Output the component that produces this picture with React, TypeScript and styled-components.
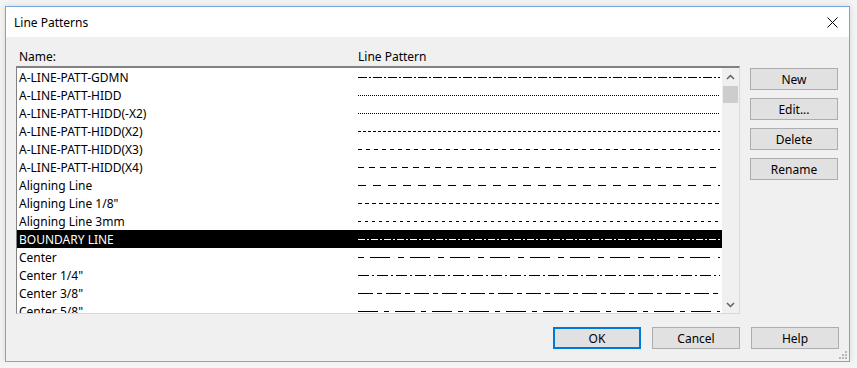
import { ReactElement } from 'react';
import styled, { createGlobalStyle } from 'styled-components';

type Row = { name: string; dash: string };

const rows: Row[] = [
    { name: 'A-LINE-PATT-GDMN', dash: '9 2 2 2' },
    { name: 'A-LINE-PATT-HIDD', dash: '1 1' },
    { name: 'A-LINE-PATT-HIDD(-X2)', dash: '1 1' },
    { name: 'A-LINE-PATT-HIDD(X2)', dash: '3 2' },
    { name: 'A-LINE-PATT-HIDD(X3)', dash: '4 4' },
    { name: 'A-LINE-PATT-HIDD(X4)', dash: '6 5' },
    { name: 'Aligning Line', dash: '8 7' },
    { name: 'Aligning Line 1/8"', dash: '4 3' },
    { name: 'Aligning Line 3mm', dash: '3 4' },
    { name: 'BOUNDARY LINE', dash: '7 2 2 2' },
    { name: 'Center', dash: '6 6 20 8' },
    { name: 'Center 1/4"', dash: '11 3 2 3' },
    { name: 'Center 3/8"', dash: '15 4 5 4' },
    { name: 'Center 5/8"', dash: '20 6 5 6' },
];

const SELECTED = 9;

const GlobalStyle = createGlobalStyle`
    html, body {
        margin: 0;
        padding: 0;
        background: #f4f4f4;
    }
    body {
        font-family: "Noto Sans", "Open Sans", sans-serif;
        font-size: 12px;
        color: #000;
    }
`;

const PatternLine = ({ dash, color }: { dash: string; color: string }): ReactElement => (
    <svg width="362" height="18" shapeRendering="crispEdges">
        <line x1="0" y1="9.5" x2="362" y2="9.5" stroke={color} strokeWidth="1" strokeDasharray={dash} />
    </svg>
);

const Chevron = ({ up }: { up?: boolean }): ReactElement => (
    <svg width="9" height="6" viewBox="0 0 9 6">
        <path
            d={up ? 'M1 5 L4.5 1.5 L8 5' : 'M1 1 L4.5 4.5 L8 1'}
            fill="none"
            stroke="#606060"
            strokeWidth="1.5"
        />
    </svg>
);

const App = (): ReactElement => (
    <>
        <GlobalStyle />
        <Window>
            <TitleBar>
                <Title>Line Patterns</Title>
                <CloseBtn>
                    <svg width="11" height="11" viewBox="0 0 11 11">
                        <path d="M0.5 0.5 L10.5 10.5 M10.5 0.5 L0.5 10.5" stroke="#000" strokeWidth="1" />
                    </svg>
                </CloseBtn>
            </TitleBar>
            <Body>
                <Main>
                    <ListColumn>
                        <Header>
                            <NameCol>Name:</NameCol>
                            <HeaderPattern>Line Pattern</HeaderPattern>
                        </Header>
                        <ListBox>
                            <Rows>
                                {rows.map((r, i) => (
                                    <ListRow key={r.name} $selected={i === SELECTED}>
                                        <NameCol>{r.name}</NameCol>
                                        <PatternCell>
                                            <PatternLine dash={r.dash} color={i === SELECTED ? '#fff' : '#000'} />
                                        </PatternCell>
                                    </ListRow>
                                ))}
                            </Rows>
                            <ScrollBar>
                                <Arrow>
                                    <Chevron up />
                                </Arrow>
                                <Thumb />
                                <Track />
                                <Arrow>
                                    <Chevron />
                                </Arrow>
                            </ScrollBar>
                        </ListBox>
                    </ListColumn>
                    <SideButtons>
                        <Button>New</Button>
                        <Button>Edit...</Button>
                        <Button>Delete</Button>
                        <Button>Rename</Button>
                    </SideButtons>
                </Main>
                <Footer>
                    <Button $default>OK</Button>
                    <Button>Cancel</Button>
                    <Button>Help</Button>
                    <Grip>
                        <svg width="8" height="8" viewBox="0 0 8 8">
                            <rect x="6" y="0" width="2" height="2" fill="#b8b8b8" />
                            <rect x="3" y="3" width="2" height="2" fill="#b8b8b8" />
                            <rect x="6" y="3" width="2" height="2" fill="#b8b8b8" />
                            <rect x="0" y="6" width="2" height="2" fill="#b8b8b8" />
                            <rect x="3" y="6" width="2" height="2" fill="#b8b8b8" />
                            <rect x="6" y="6" width="2" height="2" fill="#b8b8b8" />
                        </svg>
                    </Grip>
                </Footer>
            </Body>
        </Window>
    </>
);

const Window = styled.div`
    box-sizing: border-box;
    margin: 6px 0 0 5px;
    width: 845px;
    height: 356px;
    border: 1px solid #74a7dc;
    background: #f0f0f0;
    display: flex;
    flex-direction: column;
    box-shadow: 0 0 6px rgba(0, 0, 0, 0.12);
`;

const TitleBar = styled.div`
    height: 30px;
    background: #fff;
    display: flex;
    align-items: center;
    justify-content: space-between;
    padding: 0 10px 0 8px;
    flex-shrink: 0;
`;

const Title = styled.span`
    font-size: 12px;
`;

const CloseBtn = styled.span`
    display: flex;
    margin-right: 1px;
    margin-top: 1px;
`;

const Body = styled.div`
    flex: 1;
    display: flex;
    flex-direction: column;
    padding: 10px 10px 0 10px;
`;

const Main = styled.div`
    display: flex;
    gap: 10px;
`;

const ListColumn = styled.div`
    width: 724px;
    display: flex;
    flex-direction: column;
`;

const Header = styled.div`
    height: 19px;
    display: flex;
    align-items: center;
    padding-left: 1px;
    padding-bottom: 1px;
    box-sizing: border-box;
`;

const NameCol = styled.span`
    width: 341px;
    padding-left: 2px;
    box-sizing: border-box;
    white-space: nowrap;
    flex-shrink: 0;
`;

const HeaderPattern = styled.span``;

const ListBox = styled.div`
    height: 248px;
    box-sizing: border-box;
    border-top: 2px solid #828282;
    border-left: 1px solid #828282;
    border-right: 1px solid #d9d9d9;
    border-bottom: 1px solid #d9d9d9;
    background: #fff;
    display: flex;
    overflow: hidden;
`;

const Rows = styled.div`
    flex: 1;
    display: flex;
    flex-direction: column;
    overflow: hidden;
`;

const ListRow = styled.div<{ $selected?: boolean }>`
    height: 18px;
    flex-shrink: 0;
    display: flex;
    align-items: center;
    background: ${(p) => (p.$selected ? '#000' : 'transparent')};
    color: ${(p) => (p.$selected ? '#fff' : '#000')};
`;

const PatternCell = styled.span`
    display: flex;
    height: 18px;
`;

const ScrollBar = styled.div`
    width: 17px;
    background: #f0f0f0;
    display: flex;
    flex-direction: column;
    align-items: center;
    flex-shrink: 0;
`;

const Arrow = styled.div`
    height: 17px;
    width: 17px;
    display: flex;
    align-items: center;
    justify-content: center;
    flex-shrink: 0;
`;

const Thumb = styled.div`
    width: 15px;
    height: 17px;
    background: #cdcdcd;
    flex-shrink: 0;
    margin-top: 1px;
`;

const Track = styled.div`
    flex: 1;
`;

const SideButtons = styled.div`
    display: flex;
    flex-direction: column;
    gap: 8px;
    padding-top: 21px;
`;

const Button = styled.div<{ $default?: boolean }>`
    box-sizing: border-box;
    width: 88px;
    height: 22px;
    display: flex;
    align-items: center;
    justify-content: center;
    background: #e1e1e1;
    border: ${(p) => (p.$default ? '2px solid #0078d7' : '1px solid #adadad')};
`;

const Footer = styled.div`
    display: flex;
    justify-content: flex-end;
    gap: 11px;
    padding-top: 13px;
    padding-right: 0;
    position: relative;
    flex: 1;
`;

const Grip = styled.div`
    position: absolute;
    right: -8px;
    bottom: 2px;
    display: flex;
`;

export default App;
